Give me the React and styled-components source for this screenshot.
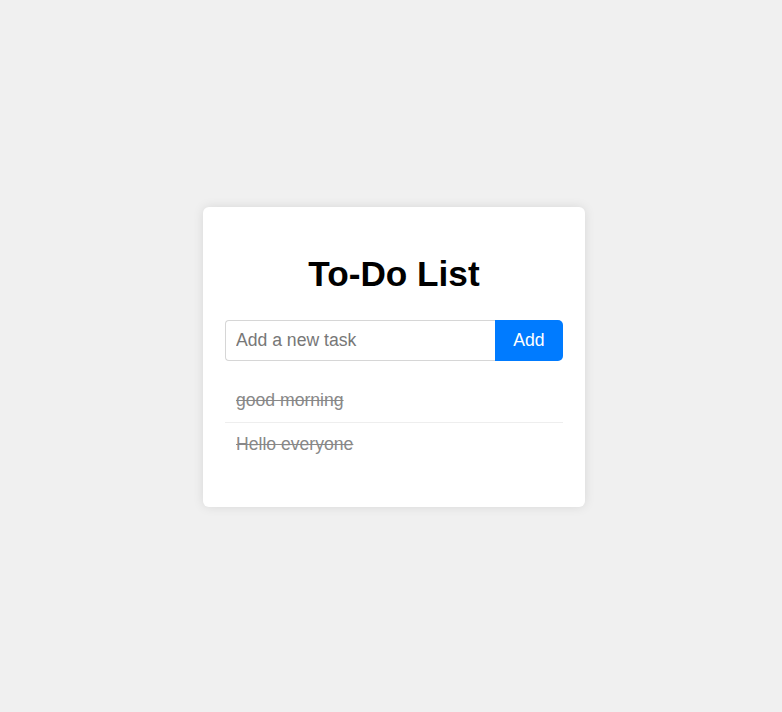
import React, { useState } from "react";
import styled, { createGlobalStyle } from "styled-components";

const GlobalStyle = createGlobalStyle`
  html, body {
    margin: 0;
    padding: 0;
    background: #f0f0f0;
    font-family: Arial, "Liberation Sans", sans-serif;
  }
`;

const Page = styled.div`
  display: flex;
  justify-content: center;
  align-items: flex-start;
  min-height: 712px;
  padding: 207px 0 0 6px;
  box-sizing: border-box;
`;

const Card = styled.div`
  width: 382px;
  box-sizing: border-box;
  background: #fff;
  padding: 22px 22px 22px;
  border-radius: 6px;
  box-shadow: 0 0 11px rgba(0, 0, 0, 0.1);
`;

const Title = styled.h1`
  margin: 25px 0 26px;
  text-align: center;
  font-size: 35.2px;
  line-height: 40px;
  font-weight: bold;
  color: #000;
`;

const Form = styled.form`
  display: flex;
  height: 41px;
`;

const Input = styled.input`
  flex: 1;
  min-width: 0;
  box-sizing: border-box;
  padding: 0 10px;
  border: 1px solid #d6d6d6;
  border-right: none;
  border-radius: 4px 0 0 4px;
  font-family: Arial, "Liberation Sans", sans-serif;
  font-size: 17.6px;
  color: #333;
  outline: none;
  &::placeholder {
    color: #777;
  }
`;

const Button = styled.button`
  width: 68px;
  border: none;
  border-radius: 0 5px 5px 0;
  background: #007bff;
  color: #fff;
  font-family: Arial, "Liberation Sans", sans-serif;
  font-size: 17.6px;
  cursor: pointer;
`;

const List = styled.ul`
  list-style: none;
  margin: 18px 0 0;
  padding: 0 0 19px;
`;

const Item = styled.li`
  padding: 11px 11px 12px;
  font-size: 17.6px;
  line-height: 20px;
  color: #888;
  text-decoration: ${(p) => (p.$done ? "line-through" : "none")};
  border-bottom: 1px solid #eee;
  cursor: pointer;
  &:last-child {
    border-bottom: none;
  }
`;

export default function App() {
  const [tasks, setTasks] = useState([
    { text: "good morning", done: true },
    { text: "Hello everyone", done: true },
  ]);
  const [value, setValue] = useState("");

  const addTask = (e) => {
    e.preventDefault();
    if (!value.trim()) return;
    setTasks([...tasks, { text: value.trim(), done: false }]);
    setValue("");
  };

  const toggle = (i) =>
    setTasks(tasks.map((t, idx) => (idx === i ? { ...t, done: !t.done } : t)));

  return (
    <>
      <GlobalStyle />
      <Page>
        <Card>
          <Title>To-Do List</Title>
          <Form onSubmit={addTask}>
            <Input
              placeholder="Add a new task"
              value={value}
              onChange={(e) => setValue(e.target.value)}
            />
            <Button type="submit">Add</Button>
          </Form>
          <List>
            {tasks.map((t, i) => (
              <Item key={i} $done={t.done} onClick={() => toggle(i)}>
                {t.text}
              </Item>
            ))}
          </List>
        </Card>
      </Page>
    </>
  );
}
